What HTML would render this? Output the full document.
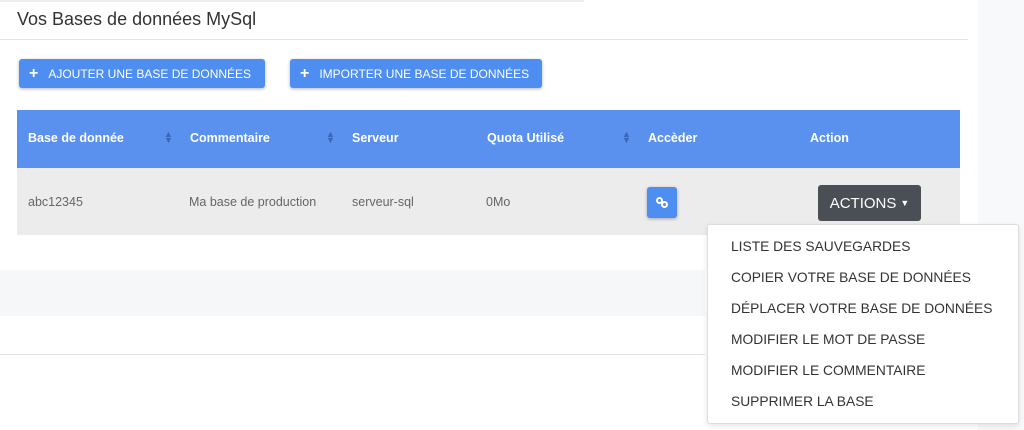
<!DOCTYPE html>
<html><head><meta charset="utf-8"><style>
*{margin:0;padding:0;box-sizing:border-box}
body{width:1024px;height:430px;background:#fff;font-family:"Liberation Sans",sans-serif;position:relative;overflow:hidden}
.abs{position:absolute}
.right{left:978px;top:0;width:46px;height:430px;background:#f8f9fa}
.btn{background:#4d8ef0;color:#fff;font-size:12px;border-radius:3px;box-shadow:0 1px 3px rgba(0,0,0,.3);display:flex;align-items:center;padding-left:10px}
.btn b{font-size:16px;margin-right:10px}
.th{color:#fff;font-weight:bold;font-size:12.5px;top:131px}
.td{color:#666;font-size:12.5px;top:195px}
.sort{color:#3a66b8;font-size:9px;top:131px;line-height:6px}
.menu{left:707px;top:224px;width:312px;height:200px;background:#fff;border:1px solid #ddd;border-radius:3px;box-shadow:0 2px 6px rgba(0,0,0,.1)}
.menu div{position:absolute;left:23px;font-size:13.8px;color:#333}
</style></head><body>
<div class="abs right"></div>
<div class="abs" style="left:0;top:0;width:584px;height:2px;background:#eee"></div>
<div class="abs" style="left:17px;top:9px;font-size:18px;color:#333">Vos Bases de données MySql</div>
<div class="abs" style="left:0;top:39px;width:968px;height:1px;background:#e3e3e3"></div>
<div class="abs btn" style="left:19px;top:59px;width:246px;height:29px"><b>+</b>AJOUTER UNE BASE DE DONNÉES</div>
<div class="abs btn" style="left:290px;top:59px;width:252px;height:29px"><b>+</b>IMPORTER UNE BASE DE DONNÉES</div>
<div class="abs" style="left:17px;top:110px;width:943px;height:58px;background:#5a90ee"></div>
<div class="abs" style="left:17px;top:168px;width:943px;height:67px;background:#ececec"></div>
<div class="abs th" style="left:28px">Base de donnée</div>
<div class="abs sort" style="left:164px">▲<br>▼</div>
<div class="abs th" style="left:190px">Commentaire</div>
<div class="abs sort" style="left:326px">▲<br>▼</div>
<div class="abs th" style="left:352px">Serveur</div>
<div class="abs th" style="left:487px">Quota Utilisé</div>
<div class="abs sort" style="left:622px">▲<br>▼</div>
<div class="abs th" style="left:648px">Accèder</div>
<div class="abs th" style="left:810px">Action</div>
<div class="abs td" style="left:28px">abc12345</div>
<div class="abs td" style="left:189px">Ma base de production</div>
<div class="abs td" style="left:352px">serveur-sql</div>
<div class="abs td" style="left:486px">0Mo</div>
<div class="abs" style="left:647px;top:187px;width:30px;height:31px;background:#4d8ef0;border-radius:3px;box-shadow:0 1px 3px rgba(0,0,0,.3)">
<svg width="30" height="31" viewBox="0 0 30 31"><g fill="none" stroke="#fff" stroke-width="2"><circle cx="12.5" cy="13.5" r="2.5"/><circle cx="17.5" cy="17.5" r="2.5"/></g></svg></div>
<div class="abs" style="left:818px;top:185px;width:103px;height:36px;background:#4a4f56;border-radius:3px;color:#fff;font-size:15px;display:flex;align-items:center;justify-content:center">ACTIONS <span style="font-size:9px;margin-left:4px">▼</span></div>
<div class="abs" style="left:0;top:270px;width:705px;height:46px;background:#f6f7f8"></div>
<div class="abs" style="left:0;top:354px;width:705px;height:1px;background:#e3e3e3"></div>
<div class="abs menu">
<div style="top:14px">LISTE DES SAUVEGARDES</div>
<div style="top:45px">COPIER VOTRE BASE DE DONNÉES</div>
<div style="top:76px">DÉPLACER VOTRE BASE DE DONNÉES</div>
<div style="top:107px">MODIFIER LE MOT DE PASSE</div>
<div style="top:138px">MODIFIER LE COMMENTAIRE</div>
<div style="top:169px">SUPPRIMER LA BASE</div>
</div>
</body></html>
